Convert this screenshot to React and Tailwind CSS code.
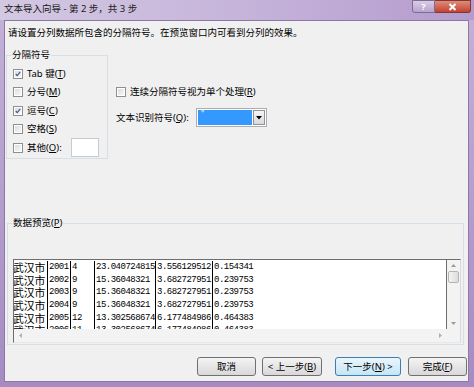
import React from "react";

const ui = { fontFamily: '"Noto Sans", "Noto Sans CJK SC", sans-serif' };

function U({ children }) {
  return <span className="underline underline-offset-[1px]">{children}</span>;
}

function Check({ checked }) {
  return (
    <div className="w-[10px] h-[10px] border border-[#8e8f8f] bg-white p-[1px] shrink-0">
      <div className="w-full h-full bg-gradient-to-br from-[#dcdcdc] to-[#f8f8f8] flex items-center justify-center">
        {checked && (
          <svg width="8" height="8" viewBox="0 0 8 8">
            <path d="M1 4 L3 6.2 L7 1.2" stroke="#3b5a8f" strokeWidth="1.6" fill="none" />
          </svg>
        )}
      </div>
    </div>
  );
}

function Btn({ children, w, focus }) {
  return (
    <div
      className={
        "h-[19px] rounded-[3px] border flex items-center justify-center text-[9.5px] leading-[12px] text-black " +
        (focus
          ? "border-[#3c7fb1] bg-gradient-to-b from-[#eaf6fd] to-[#c4e5f6]"
          : "border-[#707070] bg-gradient-to-b from-[#f4f4f4] to-[#d8d8d8]")
      }
      style={{ width: w }}
    >
      {children}
    </div>
  );
}

const rows = [
  ["武汉市", "2001", "4", "23.040724815", "3.556129512", "0.154341"],
  ["武汉市", "2002", "9", "15.36048321", "3.682727951", "0.239753"],
  ["武汉市", "2003", "9", "15.36048321", "3.682727951", "0.239753"],
  ["武汉市", "2004", "9", "15.36048321", "3.682727951", "0.239753"],
  ["武汉市", "2005", "12", "13.302568674", "6.177484986", "0.464383"],
  ["武汉市", "2006", "11", "13.302568674", "6.177484986", "0.464383"],
];

const mono = { fontFamily: '"Liberation Mono", monospace' };
const cjk = { fontFamily: '"Noto Sans CJK SC", sans-serif' };

export default function App() {
  return (
    <div
      className="w-[474px] h-[387px] flex flex-col bg-gradient-to-b from-[#c4b2d8] to-[#a58bc2] overflow-hidden"
      style={ui}
    >
      {/* title bar */}
      <div className="h-[20px] flex items-start bg-gradient-to-r from-[#d3c8e2] via-[#c6b4da] to-[#b49bcd] shrink-0">
        <div className="pl-[4px] pt-[3px] text-[9.5px] leading-[12px] text-[#1a1a1a]">
          文本导入向导 - 第 2 步，共 3 步
        </div>
        <div className="ml-auto mr-[3px] flex">
          <div className="w-[23px] h-[13px] border border-[#7d6d92] rounded-bl-[3px] bg-gradient-to-b from-[#d9cde6] to-[#b8a4cf] flex items-center justify-center text-[9px] leading-[9px] text-white font-bold">
            ?
          </div>
          <div className="w-[36px] h-[13px] border border-[#7d3a35] border-l-0 rounded-br-[3px] bg-gradient-to-b from-[#e08a7c] to-[#c4402f] flex items-center justify-center">
            <svg width="9" height="8" viewBox="0 0 9 8">
              <path d="M1.5 1 L7.5 7 M7.5 1 L1.5 7" stroke="white" strokeWidth="2" />
            </svg>
          </div>
        </div>
      </div>

      {/* client */}
      <div className="ml-[4px] mr-[5px] mb-[5px] h-[362px] bg-[#f0f0f0] border border-[#8c78a6] flex flex-col text-black text-[9.5px] leading-[12px]">
        <div className="mt-[6px] pl-[3px] h-[12px]">
          请设置分列数据所包含的分隔符号。在预览窗口内可看到分列的效果。
        </div>

        <div className="flex mt-[16px]">
          {/* 分隔符号 group */}
          <div className="ml-[1px] w-[102px] h-[104px] border border-[#d5dfe5] flex flex-col shrink-0">
            <div className="-mt-[7px] ml-[4px] px-[1px] w-fit bg-[#f0f0f0] h-[12px]">分隔符号</div>
            <div className="flex flex-col pl-[6px] mt-[7px] gap-[7.5px]">
              <div className="flex items-center h-[11px] gap-[4px]">
                <Check checked />
                <span>Tab 键(<U>T</U>)</span>
              </div>
              <div className="flex items-center h-[11px] gap-[4px]">
                <Check />
                <span>分号(<U>M</U>)</span>
              </div>
              <div className="flex items-center h-[11px] gap-[4px]">
                <Check checked />
                <span>逗号(<U>C</U>)</span>
              </div>
              <div className="flex items-center h-[11px] gap-[4px]">
                <Check />
                <span>空格(<U>S</U>)</span>
              </div>
              <div className="flex items-center h-[11px] gap-[4px]">
                <Check />
                <span>其他(<U>O</U>):</span>
                <div className="ml-[5px] w-[28px] h-[19px] bg-white border border-[#c6cad1]" />
              </div>
            </div>
          </div>

          {/* right controls */}
          <div className="flex flex-col ml-[8px] mt-[31px]">
            <div className="flex items-center h-[11px] gap-[4px]">
              <Check />
              <span>连续分隔符号视为单个处理(<U>R</U>)</span>
            </div>
            <div className="flex items-center mt-[11px]">
              <span className="w-[80px]">文本识别符号(<U>Q</U>):</span>
              <div className="w-[71px] h-[19px] bg-white border border-[#abadb3] flex p-[1px]">
                <div className="flex-1 bg-[#3399ff] text-white text-[8px] leading-[8px] pl-[3px]">"</div>
                <div className="w-[12px] ml-[1px] border border-[#8e9299] bg-gradient-to-b from-[#f5f5f5] to-[#d9d9d9] flex items-center justify-center">
                  <svg width="6" height="4" viewBox="0 0 6 4">
                    <path d="M0 0 H6 L3 3.5 Z" fill="#000" />
                  </svg>
                </div>
              </div>
            </div>
          </div>
        </div>

        {/* 数据预览 group */}
        <div className="ml-[2px] mt-[64px] w-[457px] h-[122px] border border-[#d5dfe5] flex flex-col">
          <div className="-mt-[7px] ml-[4px] px-[1px] w-fit bg-[#f0f0f0] h-[12px]">
            数据预览(<U>P</U>)
          </div>
          <div className="ml-[5px] mt-[30px] w-[448px] h-[84px] border-t border-l border-[#6e6e6e] border-r border-b border-r-[#d8d8d8] border-b-[#e8e8e8] flex flex-col bg-white">
            <div className="flex flex-1 min-h-0">
              <div className="flex-1 flex flex-col overflow-hidden border-r border-[#6e6e6e] pt-[1px]">
                {rows.map((r, i) => (
                  <div key={i} className="flex h-[12.7px] shrink-0 items-center whitespace-nowrap">
                    <div className="w-[34px] shrink-0 text-[10.8px] leading-[12.7px] -ml-[1px] overflow-visible" style={cjk}>
                      {r[0]}
                    </div>
                    <div className="w-[23px] h-full shrink-0 border-l border-black pl-[1px] text-[9px] tracking-[-0.5px] leading-[12.7px]" style={mono}>{r[1]}</div>
                    <div className="w-[24px] h-full shrink-0 border-l border-black pl-[1px] text-[9px] tracking-[-0.5px] leading-[12.7px]" style={mono}>{r[2]}</div>
                    <div className="w-[61px] h-full shrink-0 border-l border-black pl-[1px] text-[9px] tracking-[-0.5px] leading-[12.7px]" style={mono}>{r[3]}</div>
                    <div className="w-[57px] h-full shrink-0 border-l border-black pl-[1px] text-[9px] tracking-[-0.5px] leading-[12.7px]" style={mono}>{r[4]}</div>
                    <div className="flex-1 h-full border-l border-black pl-[1px] text-[9px] tracking-[-0.5px] leading-[12.7px]" style={mono}>{r[5]}</div>
                  </div>
                ))}
              </div>
              <div className="w-[13px] flex flex-col items-center bg-[#f3f3f3]">
                <svg className="mt-[4px]" width="5" height="3" viewBox="0 0 5 3">
                  <path d="M0 3 L2.5 0 L5 3 Z" fill="#9a9a9a" />
                </svg>
                <div className="mt-[4px] w-[11px] h-[12px] border border-[#b4b4b4] rounded-[2px] bg-gradient-to-r from-[#f4f4f4] to-[#dcdcdc]" />
                <svg className="mt-auto mb-[4px]" width="5" height="3" viewBox="0 0 5 3">
                  <path d="M0 0 L2.5 3 L5 0 Z" fill="#9a9a9a" />
                </svg>
              </div>
            </div>
            <div className="h-[13px] flex items-center bg-[#f3f3f3] pr-[18px] pl-[5px]">
              <svg width="3" height="5" viewBox="0 0 3 5">
                <path d="M3 0 L0 2.5 L3 5 Z" fill="#b0b0b0" />
              </svg>
              <svg className="ml-auto" width="3" height="5" viewBox="0 0 3 5">
                <path d="M0 0 L3 2.5 L0 5 Z" fill="#b0b0b0" />
              </svg>
            </div>
          </div>
        </div>

        {/* buttons */}
        <div className="flex mt-[12px] ml-[192px]">
          <Btn w={59}>取消</Btn>
          <div className="ml-[6px]">
            <Btn w={60}>&lt; 上一步(<U>B</U>)</Btn>
          </div>
          <div className="ml-[13px]">
            <Btn w={66} focus>下一步(<U>N</U>) &gt;</Btn>
          </div>
          <div className="ml-[7px]">
            <Btn w={59}>完成(<U>F</U>)</Btn>
          </div>
        </div>
      </div>
    </div>
  );
}
